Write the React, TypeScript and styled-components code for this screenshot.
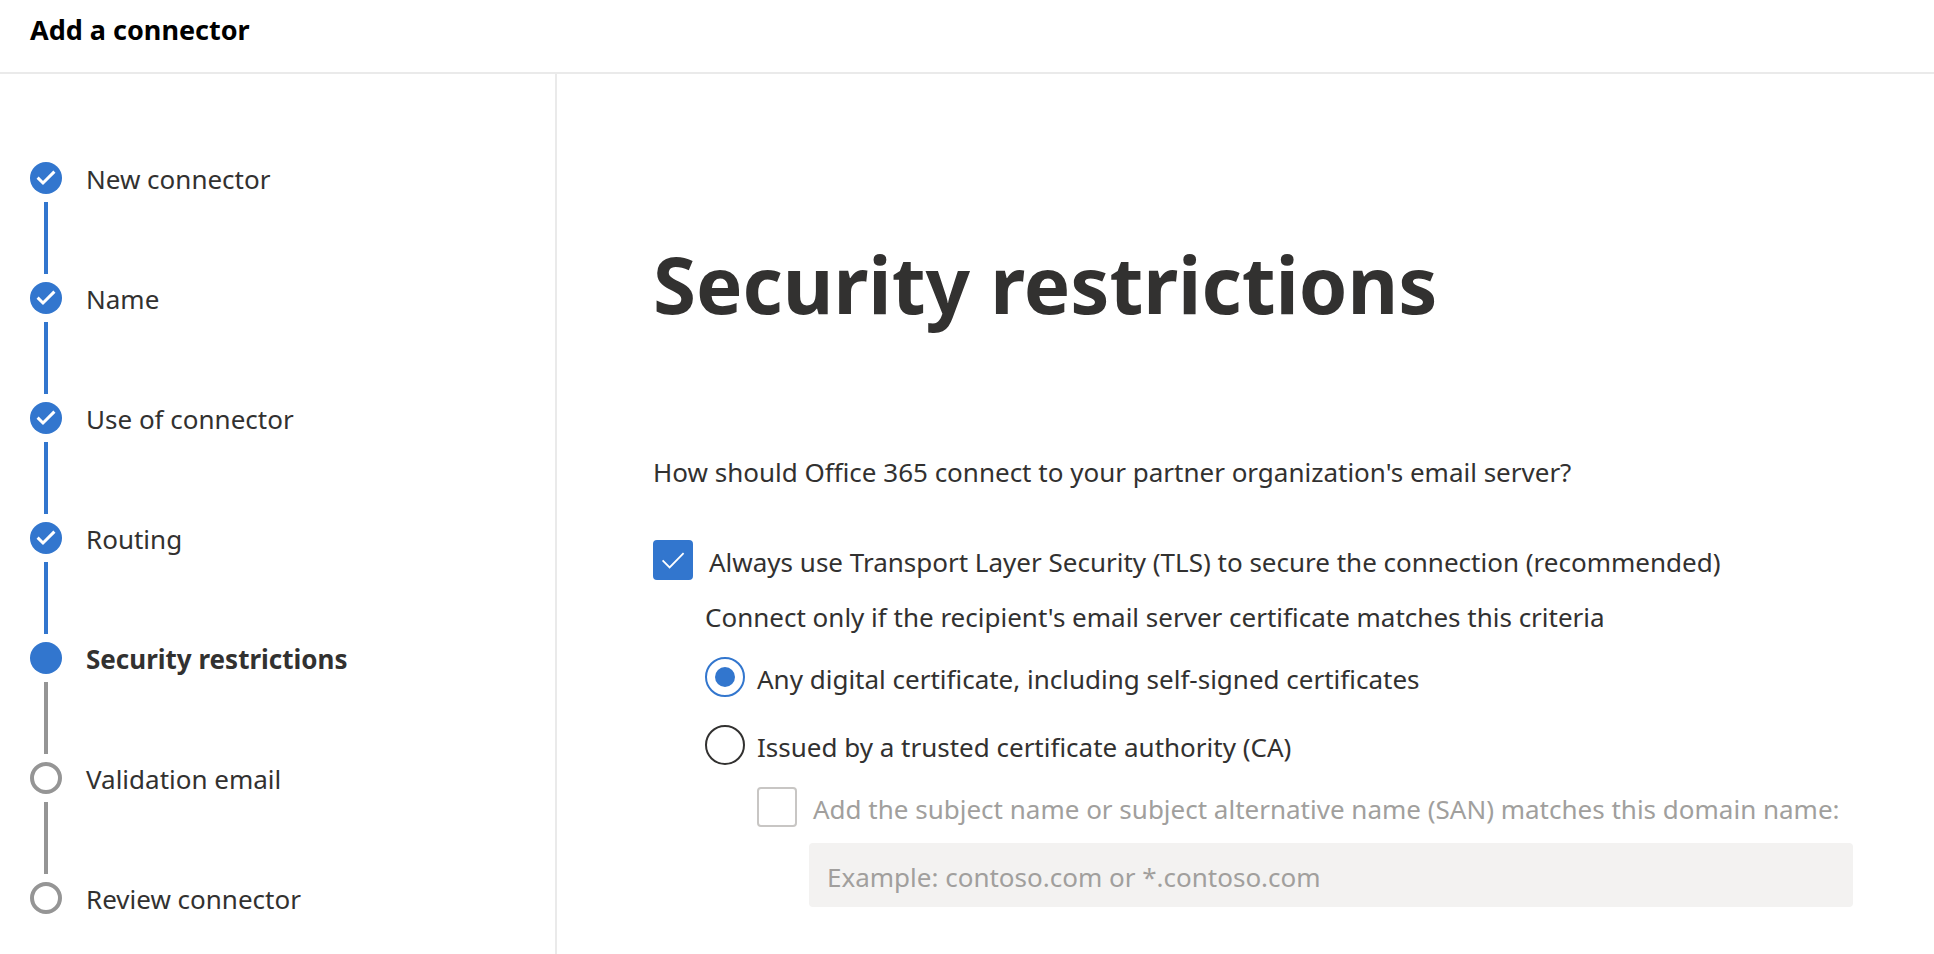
import { useState } from "react";
import styled, { createGlobalStyle, css } from "styled-components";

const BLUE = "#3276ce";
const INK = "#323130";
const GREY = "#959595";
const MUTED = "#a19f9d";
const RULE = "#eaeaea";
const FONT = '"Segoe UI", "Noto Sans", "Open Sans", sans-serif';

const GlobalStyle = createGlobalStyle`
  *, *::before, *::after { box-sizing: border-box; }
  body {
    margin: 0;
    background: #fff;
    color: ${INK};
    font: 400 26px/40px ${FONT};
  }
`;

const Page = styled.div`
  display: flex;
  flex-direction: column;
  min-height: 100vh;
`;

const Header = styled.header`
  padding: 10px 30px 22px;
  border-bottom: 2px solid ${RULE};
`;

const HeaderTitle = styled.div`
  color: #000;
  font-size: 27px;
  font-weight: 700;
`;

const Body = styled.div`
  display: flex;
  flex: 1;
`;

const Sidebar = styled.nav`
  flex: 0 0 557px;
  padding: 84px 30px 0;
  border-right: 2px solid ${RULE};
`;

const StepList = styled.ol`
  margin: 0;
  padding: 0;
  list-style: none;
`;

type StepState = "done" | "current" | "todo";

const Step = styled.li`
  display: flex;
  gap: 24px;
  height: 120px;

  &:last-child {
    height: 40px;
  }
`;

const Rail = styled.div`
  display: flex;
  flex-direction: column;
  align-items: center;
  gap: 8px;
  padding: 4px 0;
`;

const Marker = styled.span<{ $state: StepState }>`
  display: grid;
  place-items: center;
  flex: none;
  width: 32px;
  height: 32px;
  border-radius: 50%;
  ${({ $state }) =>
    $state === "todo"
      ? css`
          border: 4px solid ${GREY};
        `
      : css`
          background: ${BLUE};
        `}
`;

const Connector = styled.span<{ $done: boolean }>`
  flex: 1;
  width: 4px;
  background: ${({ $done }) => ($done ? BLUE : GREY)};
`;

const StepLabel = styled.span<{ $current: boolean }>`
  padding-top: 1px;
  font-weight: ${({ $current }) => ($current ? 700 : 400)};
`;

const Main = styled.main`
  flex: 1;
  min-width: 0;
  padding: 158px 81px 32px 96px;
`;

const Heading = styled.h1`
  margin: 0;
  font-size: 78px;
  line-height: 104px;
  font-weight: 700;
`;

const Question = styled.p`
  margin: 116px 0 48px;
`;

const Indent = styled.div`
  padding-left: 52px;
`;

const Criteria = styled.p`
  margin: 17px 0 20px;
`;

const Option = styled.label<{ $muted?: boolean; $gap: number }>`
  display: flex;
  align-items: flex-start;
  gap: ${({ $gap }) => $gap}px;
  color: ${({ $muted }) => ($muted ? MUTED : INK)};
`;

const OptionText = styled.span`
  padding-top: 4px;
  line-height: 36px;
  white-space: nowrap;
`;

const CheckWrap = styled.span`
  display: grid;
  place-items: center;
  flex: none;
  width: 40px;
  height: 40px;

  & > * {
    grid-area: 1 / 1;
  }

  & > svg {
    pointer-events: none;
  }
`;

const CheckInput = styled.input`
  appearance: none;
  width: 40px;
  height: 40px;
  margin: 0;
  border: 2px solid ${INK};
  border-radius: 4px;
  background: #fff;

  &:checked {
    border-color: ${BLUE};
    background: ${BLUE};
  }

  &:disabled {
    border-color: #c8c6c4;
  }
`;

const RadioInput = styled.input`
  appearance: none;
  display: grid;
  place-content: center;
  flex: none;
  width: 40px;
  height: 40px;
  margin: 0;
  border: 2px solid ${INK};
  border-radius: 50%;

  &:checked {
    border-color: ${BLUE};
  }

  &:checked::before {
    content: "";
    width: 20px;
    height: 20px;
    border-radius: 50%;
    background: ${BLUE};
  }
`;

const RadioGroup = styled.div`
  display: flex;
  flex-direction: column;
  gap: 28px;
  margin-bottom: 22px;
`;

const DomainInput = styled.input`
  display: block;
  width: 100%;
  height: 64px;
  padding: 4px 18px 0;
  border: 0;
  border-radius: 4px;
  background: #f3f2f1;
  font: inherit;

  &::placeholder {
    color: ${MUTED};
    opacity: 1;
  }
`;

const DomainField = styled.div`
  padding: 16px 0 0 52px;
`;

const StepCheck = () => (
  <svg width="32" height="32" viewBox="0 0 32 32" fill="none" stroke="#fff" strokeWidth="3" aria-hidden="true">
    <path d="M7.6 15.6 13 21 24.4 9.6" />
  </svg>
);

const BoxCheck = () => (
  <svg width="40" height="40" viewBox="0 0 40 40" fill="none" stroke="#fff" strokeWidth="1.8" aria-hidden="true">
    <path d="M9.6 20.4 16.6 27.4 30.6 13.2" />
  </svg>
);

const steps: { label: string; state: StepState }[] = [
  { label: "New connector", state: "done" },
  { label: "Name", state: "done" },
  { label: "Use of connector", state: "done" },
  { label: "Routing", state: "done" },
  { label: "Security restrictions", state: "current" },
  { label: "Validation email", state: "todo" },
  { label: "Review connector", state: "todo" },
];

export default function App() {
  const [tls, setTls] = useState(true);
  const [certificate, setCertificate] = useState("any");
  const [matchName, setMatchName] = useState(false);
  const nameDisabled = certificate !== "ca";

  return (
    <>
      <GlobalStyle />
      <Page>
        <Header>
          <HeaderTitle>Add a connector</HeaderTitle>
        </Header>
        <Body>
          <Sidebar aria-label="Steps">
            <StepList>
              {steps.map(({ label, state }, i) => (
                <Step key={label} aria-current={state === "current" ? "step" : undefined}>
                  <Rail>
                    <Marker $state={state}>{state === "done" && <StepCheck />}</Marker>
                    {i < steps.length - 1 && <Connector $done={state === "done"} />}
                  </Rail>
                  <StepLabel $current={state === "current"}>{label}</StepLabel>
                </Step>
              ))}
            </StepList>
          </Sidebar>
          <Main>
            <Heading>Security restrictions</Heading>
            <Question>How should Office 365 connect to your partner organization's email server?</Question>
            <Option $gap={16}>
              <CheckWrap>
                <CheckInput type="checkbox" checked={tls} onChange={(e) => setTls(e.target.checked)} />
                {tls && <BoxCheck />}
              </CheckWrap>
              <OptionText>Always use Transport Layer Security (TLS) to secure the connection (recommended)</OptionText>
            </Option>
            <Indent>
              <Criteria id="criteria">
                Connect only if the recipient's email server certificate matches this criteria
              </Criteria>
              <RadioGroup role="radiogroup" aria-labelledby="criteria">
                <Option $gap={12}>
                  <RadioInput
                    type="radio"
                    name="certificate"
                    checked={certificate === "any"}
                    onChange={() => setCertificate("any")}
                  />
                  <OptionText>Any digital certificate, including self-signed certificates</OptionText>
                </Option>
                <Option $gap={12}>
                  <RadioInput
                    type="radio"
                    name="certificate"
                    checked={certificate === "ca"}
                    onChange={() => setCertificate("ca")}
                  />
                  <OptionText>Issued by a trusted certificate authority (CA)</OptionText>
                </Option>
              </RadioGroup>
              <Indent>
                <Option $gap={16} $muted={nameDisabled}>
                  <CheckWrap>
                    <CheckInput
                      type="checkbox"
                      disabled={nameDisabled}
                      checked={matchName}
                      onChange={(e) => setMatchName(e.target.checked)}
                    />
                    {matchName && <BoxCheck />}
                  </CheckWrap>
                  <OptionText>
                    Add the subject name or subject alternative name (SAN) matches this domain name:
                  </OptionText>
                </Option>
                <DomainField>
                  <DomainInput
                    type="text"
                    aria-label="Domain name"
                    placeholder="Example: contoso.com or *.contoso.com"
                    disabled={nameDisabled || !matchName}
                  />
                </DomainField>
              </Indent>
            </Indent>
          </Main>
        </Body>
      </Page>
    </>
  );
}
